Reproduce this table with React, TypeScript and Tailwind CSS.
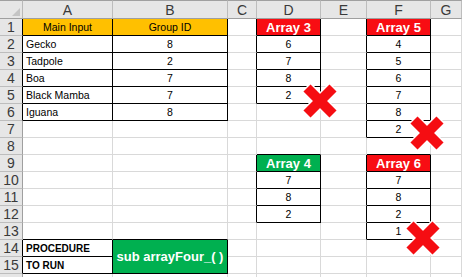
import React from "react";

type Cell = { t?: string; kind?: "orange" | "red" | "green" | "left" | "proc" | "num" };

const COLS = ["A", "B", "C", "D", "E", "F", "G"];

const data: Record<string, Cell> = {
  A1: { t: "Main Input", kind: "orange" },
  B1: { t: "Group ID", kind: "orange" },
  A2: { t: "Gecko", kind: "left" },
  A3: { t: "Tadpole", kind: "left" },
  A4: { t: "Boa", kind: "left" },
  A5: { t: "Black Mamba", kind: "left" },
  A6: { t: "Iguana", kind: "left" },
  B2: { t: "8" }, B3: { t: "2" }, B4: { t: "7" }, B5: { t: "7" }, B6: { t: "8" },
  D1: { t: "Array 3", kind: "red" },
  D2: { t: "6" }, D3: { t: "7" }, D4: { t: "8" }, D5: { t: "2" },
  F1: { t: "Array 5", kind: "red" },
  F2: { t: "4" }, F3: { t: "5" }, F4: { t: "6" }, F5: { t: "7" }, F6: { t: "8" }, F7: { t: "2" },
  D9: { t: "Array 4", kind: "green" },
  D10: { t: "7" }, D11: { t: "8" }, D12: { t: "2" },
  F9: { t: "Array 6", kind: "red" },
  F10: { t: "7" }, F11: { t: "8" }, F12: { t: "2" }, F13: { t: "1" },
  A14: { t: "PROCEDURE", kind: "proc" },
  A15: { t: "TO RUN", kind: "proc" },
};

const ranges: [number, number, number, number][] = [
  [1, 0, 6, 1],
  [1, 3, 5, 3],
  [1, 5, 7, 5],
  [9, 3, 12, 3],
  [9, 5, 13, 5],
  [14, 0, 15, 1],
];

function bordered(r: number, c: number) {
  return ranges.some(([r1, c1, r2, c2]) => r >= r1 && r <= r2 && c >= c1 && c <= c2);
}

function RedX({ left, top }: { left: number; top: number }) {
  return (
    <svg
      className="absolute"
      style={{ left, top }}
      width="38"
      height="38"
      viewBox="0 0 38 38"
    >
      <g strokeLinecap="butt">
        <line x1="5" y1="5" x2="33" y2="33" stroke="#ffffff" strokeWidth="13" />
        <line x1="33" y1="5" x2="5" y2="33" stroke="#ffffff" strokeWidth="13" />
        <line x1="6" y1="6" x2="32" y2="32" stroke="#f50d12" strokeWidth="10" />
        <line x1="32" y1="6" x2="6" y2="32" stroke="#f50d12" strokeWidth="10" />
      </g>
    </svg>
  );
}

export default function App() {
  const rows = Array.from({ length: 16 }, (_, i) => i + 1);
  const cells: React.ReactNode[] = [];

  cells.push(
    <div
      key="corner"
      className="relative bg-[#e6e6e6] border-t border-t-[#a0a0a0] border-r border-r-[#b9b9b9] border-b border-b-[#9f9f9f]"
    >
      <svg className="absolute right-[2px] bottom-[2px]" width="8" height="8" viewBox="0 0 8 8">
        <polygon points="8,0 8,8 0,8" fill="#c4c4c4" />
      </svg>
    </div>
  );
  COLS.forEach((c) =>
    cells.push(
      <div
        key={"h" + c}
        className="flex items-center justify-center bg-[#e6e6e6] border-t border-t-[#a0a0a0] border-r border-r-[#bdbdbd] border-b border-b-[#9f9f9f] text-[14px] text-[#3a3a3a] leading-none"
      >
        {c}
      </div>
    )
  );

  rows.forEach((r) => {
    cells.push(
      <div
        key={"r" + r}
        className={
          "flex items-center justify-center bg-[#e6e6e6] border-b border-b-[#bdbdbd] border-r text-[14px] text-[#3a3a3a] leading-none " +
          (bordered(r, 0) ? "border-r-black" : "border-r-[#9f9f9f]")
        }
      >
        {r <= 15 ? r : ""}
      </div>
    );
    COLS.forEach((col, ci) => {
      const key = col + r;
      if (key === "B15") return;
      if (key === "B14") {
        cells.push(
          <div
            key={key}
            className="row-span-2 flex items-center justify-center bg-[#00b050] border-r border-b border-r-black border-b-black text-white font-bold text-[13px] whitespace-nowrap"
          >
            sub arrayFour_( )
          </div>
        );
        return;
      }
      const cell = data[key] || {};
      const rb = bordered(r, ci) || bordered(r, ci + 1);
      const bb = bordered(r, ci) || bordered(r + 1, ci);
      let cls =
        "flex items-center overflow-visible whitespace-nowrap border-r border-b pt-[1px] " +
        (rb ? "border-r-black " : "border-r-[#d9d9d9] ") +
        (bb ? "border-b-black " : "border-b-[#d9d9d9] ");
      switch (cell.kind) {
        case "orange":
          cls += "bg-[#ffc000] justify-center text-[10.5px] text-black";
          break;
        case "red":
          cls += "bg-[#f80d13] justify-center text-[13px] font-bold text-white";
          break;
        case "green":
          cls += "bg-[#00b050] justify-center text-[13px] font-bold text-white";
          break;
        case "left":
          cls += "bg-white justify-start pl-[3px] text-[10.5px] text-black";
          break;
        case "proc":
          cls += "bg-white justify-start pl-[3px] text-[10px] font-bold text-black";
          break;
        default:
          cls += "bg-white justify-center text-[10.5px] text-black";
      }
      cells.push(
        <div key={key} className={cls}>
          {cell.t}
        </div>
      );
    });
  });

  return (
    <div className="relative w-[462px] h-[277px] overflow-hidden bg-white font-['Liberation_Sans',Arial,sans-serif]">
      <div className="grid grid-cols-[23px_90px_115px_29px_64px_46px_64px_1fr] grid-rows-[19px_repeat(16,17px)] leading-none">
        {cells}
      </div>
      <RedX left={301} top={82} />
      <RedX left={408} top={114} />
      <RedX left={404} top={219} />
    </div>
  );
}
